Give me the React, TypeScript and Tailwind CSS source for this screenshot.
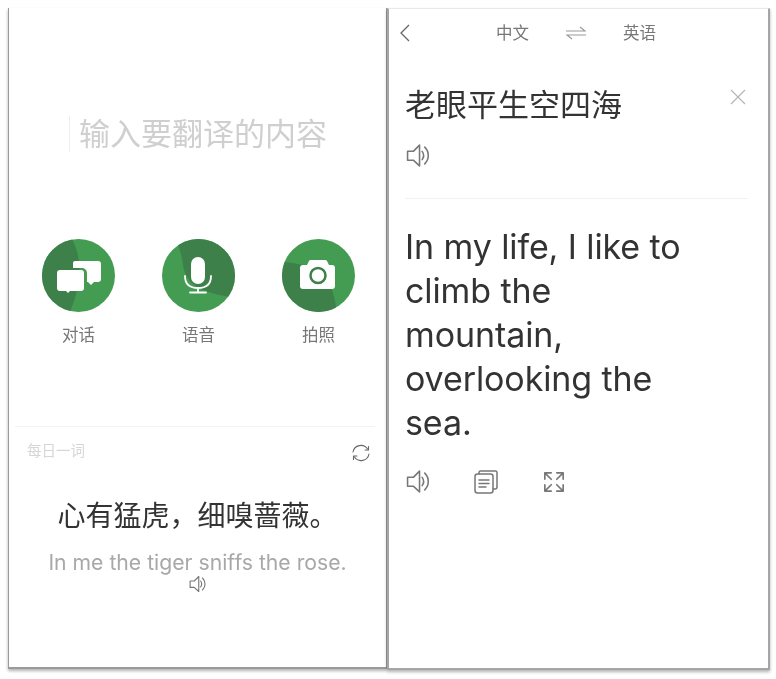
import React from "react";

const cjk = { fontFamily: 'Inter, "Noto Sans CJK SC", sans-serif' };

function Speaker({ className }: { className: string }) {
  return (
    <svg viewBox="0 0 24 24" fill="none" stroke="currentColor" strokeWidth="1.500" strokeLinejoin="round" strokeLinecap="round" className={className}>
      <path d="M1.500 8H7L13 2V22L7 16.500H1.500Z" />
      <path d="M15.500 8c1.800 2.500 1.800 5.500 0 8" />
      <path d="M18 4c4.500 4.500 4.500 11.500 0 16" />
    </svg>
  );
}

function GreenCircle({ id, dark, children }: { id: string; dark: string; children: React.ReactNode }) {
  return (
    <svg viewBox="0 0 73 73" className="w-[73px] h-[73px] block">
      <defs>
        <clipPath id={id}>
          <circle cx="36.500" cy="36.500" r="36.500" />
        </clipPath>
      </defs>
      <circle cx="36.500" cy="36.500" r="36.500" fill="#439c51" />
      <path d={dark} fill="#3d8049" clipPath={`url(#${id})`} />
      {children}
    </svg>
  );
}

function Action({ label, children }: { label: string; children: React.ReactNode }) {
  return (
    <div className="flex flex-col items-center w-[73px]">
      {children}
      <span className="mt-[13px] text-[16.500px] leading-[20px] text-[#777] whitespace-nowrap">{label}</span>
    </div>
  );
}

export default function App() {
  return (
    <div className="w-[776px] h-[679px] bg-white overflow-hidden flex pt-2 pl-2 blur-[0.4px]" style={cjk}>
      <section className="w-[379px] h-[661px] bg-white border-l border-r border-b-2 border-[#9a9a9a] shadow-[0_2px_3px_rgba(0,0,0,0.3)] flex flex-col">
        <div className="mt-[108px] ml-[60px] pl-[9px] border-l border-[#eeeeee] h-[36px] flex items-center text-[31px] leading-[36px] text-[#cfcfcf] whitespace-nowrap">
          输入要翻译的内容
        </div>
        <div className="mt-[87px] pl-[33px] pr-[31px] flex justify-between">
          <Action label="对话">
            <GreenCircle id="chat" dark="M-2 -2H29C38 14 43 38 27 75H-2Z">
              <path d="M33 22h23a3 3 0 0 1 3 3v15a3 3 0 0 1-3 3h-4l-3 3-3-3h-1V34a5 5 0 0 0-5-5H31v-5a2 2 0 0 1 2-2Z" fill="#fff" />
              <path d="M18 31h21a3 3 0 0 1 3 3v15a3 3 0 0 1-3 3H28l-2 2-2-2h-6a3 3 0 0 1-3-3V34a3 3 0 0 1 3-3Z" fill="#fff" />
            </GreenCircle>
          </Action>
          <Action label="语音">
            <GreenCircle id="mic" dark="M13 -2H75V59L69 58C50 55 24 50 21 26C20 18 18 10 13 -2Z">
              <rect x="29" y="18" width="14" height="27" rx="7" fill="#fff" />
              <path d="M23 37c0 8 5 12 13 12s13-4 13-12" fill="none" stroke="#fff" strokeWidth="1.800" strokeLinecap="round" />
              <path d="M36 49v4M28 53.500h16" fill="none" stroke="#fff" strokeWidth="1.800" strokeLinecap="round" />
            </GreenCircle>
          </Action>
          <Action label="拍照">
            <GreenCircle id="cam" dark="M-2 23C18 24 33 28 44 40C50 48 53 58 55 75H-2Z">
              <path d="M25 26l2-4a2 2 0 0 1 2-1h14a2 2 0 0 1 2 1l2 4h3a3 3 0 0 1 3 3v18a3 3 0 0 1-3 3H21a3 3 0 0 1-3-3V29a3 3 0 0 1 3-3Z" fill="#fff" />
              <circle cx="36" cy="36.500" r="7.500" fill="#fff" stroke="#3d8049" strokeWidth="2.500" />
            </GreenCircle>
          </Action>
        </div>
        <div className="mt-[81px] ml-[6px] mr-[11px] border-t border-[#f3f3f3] pt-[14px] pl-[12px] pr-[4px] flex items-start justify-between">
          <span className="text-[14.500px] leading-[19px] text-[#d6d6d6]">每日一词</span>
          <svg viewBox="0 0 20 20" fill="none" stroke="#666" strokeWidth="1.100" strokeLinecap="round" className="w-5 h-5 mt-[2px]">
            <path d="M2 9a8 8 0 0 1 14.500-3" />
            <path d="M18 11a8 8 0 0 1-14.500 3" />
            <path d="M17.500 3.500v3.500h-3.500M2.500 16.500V13H6" strokeLinejoin="round" />
          </svg>
        </div>
        <div className="mt-[33px] text-center text-[28px] leading-[40px] text-[#333] whitespace-nowrap">心有猛虎，细嗅蔷薇。</div>
        <div className="mt-[12px] text-center text-[21.200px] leading-[28px] text-[#a8a8a8] whitespace-nowrap">In me the tiger sniffs the rose.</div>
        <div className="-mt-[1px] flex justify-center">
          <Speaker className="w-[18px] h-[18px] text-[#777]" />
        </div>
      </section>

      <section className="w-[383px] h-[662px] bg-white border-l-2 border-r-2 border-b-2 border-t border-t-[#e8e8e8] border-[#a5a5a5] shadow-[0_2px_3px_rgba(0,0,0,0.3)] flex flex-col pl-[16px] pr-[20px]">
        <header className="relative h-[48px] flex items-center justify-center text-[16.500px] text-[#777]">
          <svg viewBox="0 0 12 20" fill="none" stroke="#666" strokeWidth="1.300" className="absolute -left-[6px] top-[14px] w-[12px] h-[20px]">
            <path d="M10 2 2 10l8 8" />
          </svg>
          <div className="flex items-center gap-[37px] -ml-[1px]">
            <span>中文</span>
            <svg viewBox="0 0 20 14" fill="none" stroke="#999" strokeWidth="1.200" className="w-[20px] h-[14px]">
              <path d="M0 5h19L14 1M20 9H1l5 4" />
            </svg>
            <span>英语</span>
          </div>
        </header>
        <div className="relative mt-[28px] text-[31px] leading-[40px] text-[#333] whitespace-nowrap">
          老眼平生空四海
          <svg viewBox="0 0 16 16" fill="none" stroke="#b4b4b4" strokeWidth="1.100" className="absolute right-[2px] top-[4px] w-[16px] h-[16px]">
            <path d="M1 1 15 15M15 1 1 15" />
          </svg>
        </div>
        <Speaker className="w-[25px] h-[25px] mt-[18px] ml-[1px] text-[#777]" />
        <div className="mt-[30px] border-t border-[#f1f1f1] pt-[26px] text-[34px] leading-[44px] text-[#333] -tracking-[0.1px]">
          In my life, I like to<br />climb the<br />mountain,<br />overlooking the<br />sea.
        </div>
        <div className="mt-[24px] flex items-center">
          <Speaker className="w-[25px] h-[25px] ml-[1px] text-[#777]" />
          <svg viewBox="0 0 24 24" fill="none" stroke="#777" strokeWidth="1.500" strokeLinecap="round" className="w-[24px] h-[24px] ml-[43px]">
            <rect x="1" y="4" width="18" height="19" rx="2.500" />
            <path d="M5 4V2.500A1.500 1.500 0 0 1 6.500 1H21.500A1.500 1.500 0 0 1 23 2.500V17a2 2 0 0 1-2 2h-2" />
            <path d="M5 10h10M5 13.500h10M5 17h7" />
          </svg>
          <svg viewBox="0 0 24 24" fill="none" stroke="#777" strokeWidth="1.800" strokeLinecap="round" strokeLinejoin="round" className="w-[22px] h-[22px] ml-[45px]">
            <path d="M2 9V2h7M2 2l7 7M15 2h7v7M22 2l-7 7M2 15v7h7M2 22l7-7M22 15v7h-7M22 22l-7-7" />
          </svg>
        </div>
      </section>
    </div>
  );
}
